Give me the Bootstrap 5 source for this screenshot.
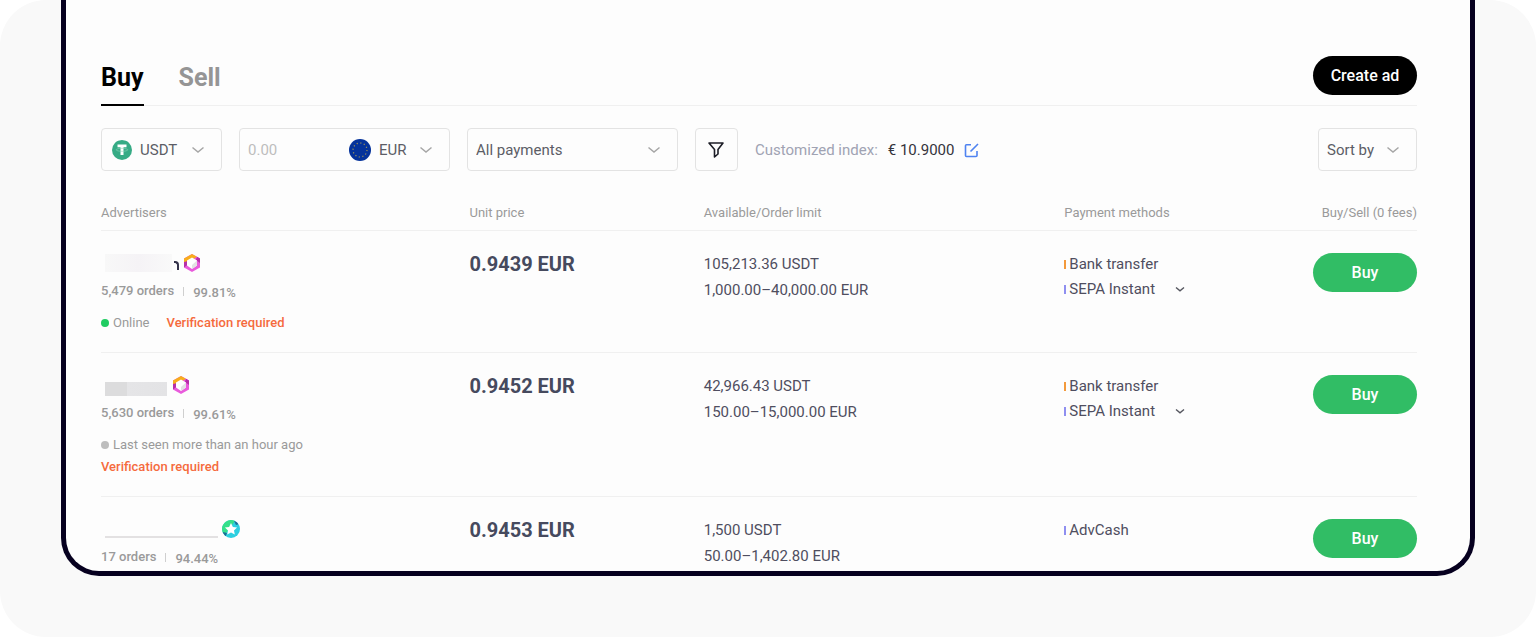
<!DOCTYPE html>
<html lang="en">
<head>
<meta charset="utf-8">
<meta name="viewport" content="width=device-width, initial-scale=1">
<title>P2P trading</title>
<link rel="stylesheet" href="https://cdn.jsdelivr.net/npm/bootstrap@5.3.0/dist/css/bootstrap.min.css">
<style>
:root{--ink:#06001f;--line:#f0f0f0;--box:#e3e3e3;--muted:#9a9a9a;--txt:#5c5d66;--cell:#4f4e60;
--chev:url("data:image/svg+xml,%3Csvg xmlns='http://www.w3.org/2000/svg' viewBox='0 0 14 8'%3E%3Cpath d='M1.5 1.5 7 6l5.5-4.5' fill='none' stroke='%23a6a6a6' stroke-width='1.5'/%3E%3C/svg%3E")}
body{font-family:Roboto,"Noto Sans",sans-serif;font-size:15px;color:var(--txt);background:#fff}
.stage{background:#f9f9f9;border-radius:46px;padding:0 61px 61px}
.frame{background:#fdfdfd;border:5px solid var(--ink);border-top:0;border-radius:0 0 38px 38px;padding:55px 53px 0 35px;overflow:hidden}
.tabbar{border-bottom:1px solid var(--line);height:51px}
.tabbar .nav{gap:35px;margin-bottom:-1px}
.tabbar .nav-link{padding:6px 0 0;font-size:25px;line-height:34px;font-weight:700;color:#959595;border-bottom:2px solid transparent}
.tabbar .nav-link.active{color:#000;border-color:#000}
.pill{height:39px;width:104px;padding:0;border:0;border-radius:20px;font-size:16px;font-weight:500;color:#fff;margin-top:1px}
.pill-dark,.pill-dark:hover{background:#000;color:#fff}
.pill-green,.pill-green:hover{background:#31bd65;color:#fff}
.filters{gap:17px;margin-top:22px}
.box{height:43px;border:1px solid var(--box);border-radius:4px;background:transparent}
.box select,.box input{border:0;background-color:transparent;padding:0;font-size:15px;color:var(--txt);box-shadow:none;line-height:24px}
.box input::placeholder{color:#bdbdbd}
.box .form-select{background-image:var(--chev);background-size:14px 8px;background-position:right center}
.w-sm{width:121px;padding-left:10px}.w-lg{width:211px}.w-sort{width:99px}.w-eur{width:54px}
.index{column-gap:10px;padding-top:1px}
.label-index{color:#a0a3b3}
.val-index{color:#35343c}
.ads{margin:33px 0 0;table-layout:fixed;width:100%;border-collapse:separate;border-spacing:0}
.ads th{font-weight:400;font-size:13px;line-height:18px;color:var(--muted);padding:0 0 8px;border-bottom:1px solid var(--line)}
.ads td{vertical-align:top;padding:20px 0 18px;border-bottom:1px solid var(--line);color:var(--cell)}
.ads tr:last-child td{border-bottom:0;padding-bottom:2px}
.name-row{height:24px}
.orders{margin-top:5px;line-height:20px;font-size:13px;font-weight:500;color:var(--muted)}
.orders .sep{width:1px;height:9px;background:#cfcfcf;margin:0 9px}
.orders .rate{padding-top:4px;line-height:18px}
.status{margin-top:10px;font-size:13px;line-height:22px;color:var(--muted);column-gap:17px}
.dot{width:8px;height:8px;border-radius:50%;background:#bdbdbd;margin-right:4px}
.dot-on{background:#20cc62}
.verify{color:#f56b3d;font-weight:500}
.ads td.price{padding-top:21px;font-size:20px;line-height:24px;font-weight:700;color:#464a5e}
.limits{line-height:26px}
.ads td.pay{padding-top:21px;line-height:25px}
.ads td.act{padding-top:22px}
.tick{width:2px;height:9px;background:#8f8ff0;margin-right:3px}
.tick-bank{background:#f39a3c}
.mask-a{width:67px;height:18px;margin-left:4px;background:linear-gradient(90deg,#f8f8f8,#f5f3f6 50%,#f9f9f9)}
.tail{width:5px;height:9px;border:solid #33324a;border-width:2px 2px 0 0;border-top-right-radius:4px;margin:5px 4px 0 2px}
.mask-b{width:62px;height:14px;margin:8px 5px 0 4px;background:linear-gradient(90deg,#dcdcdd 35%,#e5e5e7 35%,#e3e3e5)}
.mask-c{width:113px;height:2px;margin:15px 4px 0;background:#e3e1e2}
</style>
</head>
<body>
<svg class="d-none" aria-hidden="true">
<symbol id="hex" viewBox="0 0 18 18"><path d="M9 0 17 4.500v9L9 18 1 13.500v-9z" fill="#e95bdc"/><path d="M1 4.500 9 0l5 2.800-5 3-4.500 2.700L1 8z" fill="#f8ad1c"/><path d="M14 2.800 17 4.500V9l-4-3z" fill="#b52fa8"/><path d="M1 8v5.500l4-3V7z" fill="#b52fa8"/><path d="M9 3.600l5 2.800v5L9 15l-5-3.600v-5z" fill="#fff"/><path d="M14 6.400v5L9 15v-4z" fill="#e2e2e2"/></symbol>
</svg>
<main class="stage">
<div class="frame">
  <header class="tabbar d-flex justify-content-between align-items-stretch">
    <nav class="nav flex-nowrap">
      <a class="nav-link active" href="#buy" aria-current="page">Buy</a>
      <a class="nav-link" href="#sell">Sell</a>
    </nav>
    <button type="button" class="btn pill pill-dark">Create ad</button>
  </header>

  <form class="filters d-flex align-items-center">
    <div class="box w-sm d-flex align-items-center pe-3">
      <svg class="flex-shrink-0 me-2" width="20" height="20" viewBox="0 0 20 20" aria-hidden="true"><circle cx="10" cy="10" r="10" fill="#36ab85"/><path d="M5.500 4.500h9v2.800h-3V15H8.500V7.300h-3z" fill="#fff"/><ellipse cx="10" cy="9.800" rx="5.800" ry="1.500" fill="none" stroke="#8fd3bb" stroke-width=".6"/></svg>
      <select class="form-select" aria-label="Coin"><option>USDT</option></select>
    </div>
    <div class="box w-lg d-flex align-items-center ps-2 pe-3">
      <input class="form-control flex-fill" type="text" placeholder="0.00" aria-label="Amount">
      <svg class="flex-shrink-0 me-2" width="22" height="22" viewBox="0 0 22 22" aria-hidden="true"><circle cx="11" cy="11" r="11" fill="#05339b"/><circle cx="11" cy="11" r="7" fill="none" stroke="#9c935a" stroke-width="1.200" stroke-dasharray="1.200 2.465"/></svg>
      <select class="form-select flex-shrink-0 w-eur" aria-label="Currency"><option>EUR</option></select>
    </div>
    <div class="box w-lg d-flex align-items-center ps-2 pe-3">
      <select class="form-select" aria-label="Payment"><option>All payments</option></select>
    </div>
    <button type="button" class="btn box p-0 px-2" aria-label="Filter"><svg width="25" height="16" viewBox="0 0 25 16" fill="none" stroke="#1c1d26" stroke-width="1.600" stroke-linejoin="round" aria-hidden="true"><path d="M5 1h14l-5 6.500V12l-3.500 3V7.500z"/></svg></button>
    <div class="index d-flex align-items-center">
      <span class="label-index">Customized index:</span>
      <span class="val-index">€ 10.9000</span>
      <button type="button" class="btn border-0 p-0 d-flex" aria-label="Edit index"><svg width="15" height="15" viewBox="0 0 15 15" fill="none" stroke="#4f83f1" stroke-width="1.600" aria-hidden="true"><path d="M7 1.800H2.500q-1 0-1 1v9.700q0 1 1 1H12q1 0 1-1V8M6.500 8.500 14 1"/></svg></button>
    </div>
    <div class="box w-sort d-flex align-items-center ps-2 pe-3 ms-auto">
      <select class="form-select" aria-label="Sort by"><option>Sort by</option></select>
    </div>
  </form>

  <table class="ads">
    <colgroup><col style="width:28%"><col style="width:17.800%"><col style="width:27.400%"><col style="width:18.600%"><col></colgroup>
    <thead><tr><th>Advertisers</th><th>Unit price</th><th>Available/Order limit</th><th>Payment methods</th><th class="text-end text-nowrap">Buy/Sell (0 fees)</th></tr></thead>
    <tbody>
      <tr>
        <td>
          <div class="name-row d-flex align-items-center"><span class="mask-a"></span><span class="tail"></span><svg width="18" height="18" aria-hidden="true"><use href="#hex"/></svg></div>
          <div class="orders d-flex align-items-center"><span>5,479 orders</span><span class="sep"></span><span class="rate">99.81%</span></div>
          <div class="status d-flex flex-wrap"><span class="d-flex align-items-center"><span class="dot dot-on"></span>Online</span><span class="verify">Verification required</span></div>
        </td>
        <td class="price">0.9439 EUR</td>
        <td class="limits">105,213.36 USDT<br>1,000.00–40,000.00 EUR</td>
        <td class="pay"><div class="d-flex align-items-center"><span class="tick tick-bank"></span>Bank transfer</div><div class="d-flex align-items-center"><span class="tick"></span>SEPA Instant<button type="button" class="btn border-0 p-0 ms-3 d-flex" aria-label="More payment methods"><svg width="18" height="8" viewBox="0 0 18 8" fill="none" stroke="#55565f" stroke-width="1.400" aria-hidden="true"><path d="M5 1.500 9 4.800l4-3.300"/></svg></button></div></td>
        <td class="act text-end"><button type="button" class="btn pill pill-green mt-0">Buy</button></td>
      </tr>
      <tr>
        <td>
          <div class="name-row d-flex align-items-center"><span class="mask-b"></span><svg width="18" height="18" aria-hidden="true"><use href="#hex"/></svg></div>
          <div class="orders d-flex align-items-center"><span>5,630 orders</span><span class="sep"></span><span class="rate">99.61%</span></div>
          <div class="status"><div class="d-flex align-items-center"><span class="dot"></span>Last seen more than an hour ago</div><div class="verify">Verification required</div></div>
        </td>
        <td class="price">0.9452 EUR</td>
        <td class="limits">42,966.43 USDT<br>150.00–15,000.00 EUR</td>
        <td class="pay"><div class="d-flex align-items-center"><span class="tick tick-bank"></span>Bank transfer</div><div class="d-flex align-items-center"><span class="tick"></span>SEPA Instant<button type="button" class="btn border-0 p-0 ms-3 d-flex" aria-label="More payment methods"><svg width="18" height="8" viewBox="0 0 18 8" fill="none" stroke="#55565f" stroke-width="1.400" aria-hidden="true"><path d="M5 1.500 9 4.800l4-3.300"/></svg></button></div></td>
        <td class="act text-end"><button type="button" class="btn pill pill-green mt-0">Buy</button></td>
      </tr>
      <tr>
        <td>
          <div class="name-row d-flex align-items-center"><span class="mask-c"></span><svg width="18" height="18" viewBox="0 0 18 18" aria-hidden="true"><circle cx="9" cy="9" r="9" fill="#2ccfe0"/><path d="M0 9a9 9 0 0 1 13-8L2.500 15A9 9 0 0 1 0 9z" fill="#35e08a"/><path d="M12 .7a9 9 0 0 1 4.500 3.500L14 5zM.7 12a9 9 0 0 0 3 4.200L5 13z" fill="#1b6c96"/><path d="m9 3 1.900 3.900 4.200.6-3.100 2.900.8 4.200L9 12.600l-3.800 2 .8-4.200-3.100-2.900 4.200-.6z" fill="#fff"/></svg></div>
          <div class="orders d-flex align-items-center"><span>17 orders</span><span class="sep"></span><span class="rate">94.44%</span></div>
        </td>
        <td class="price">0.9453 EUR</td>
        <td class="limits">1,500 USDT<br>50.00–1,402.80 EUR</td>
        <td class="pay"><div class="d-flex align-items-center"><span class="tick"></span>AdvCash</div></td>
        <td class="act text-end"><button type="button" class="btn pill pill-green mt-0">Buy</button></td>
      </tr>
    </tbody>
  </table>
</div>
</main>
<script src="https://cdn.jsdelivr.net/npm/bootstrap@5.3.0/dist/js/bootstrap.bundle.min.js"></script>
</body>
</html>
